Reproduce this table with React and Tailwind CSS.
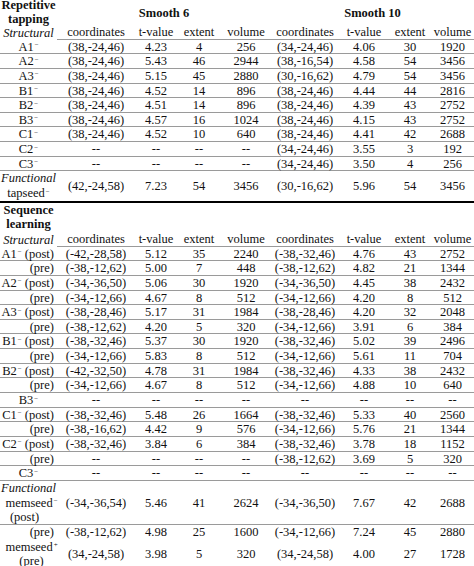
import React from "react";

const grid = "grid grid-cols-[57px_78px_42px_44px_50px_68px_50px_42px_43px]";
const heights = { 1: "h-[14.65px]", 2: "h-[29.3px]", 3: "h-[44px]" };

const tapping = [
  ["A1", ["(38,-24,46)", "4.23", "4", "256", "(34,-24,46)", "4.06", "30", "1920"]],
  ["A2", ["(38,-24,46)", "5.43", "46", "2944", "(38,-16,54)", "4.58", "54", "3456"]],
  ["A3", ["(38,-24,46)", "5.15", "45", "2880", "(30,-16,62)", "4.79", "54", "3456"]],
  ["B1", ["(38,-24,46)", "4.52", "14", "896", "(38,-24,46)", "4.44", "44", "2816"]],
  ["B2", ["(38,-24,46)", "4.51", "14", "896", "(38,-24,46)", "4.39", "43", "2752"]],
  ["B3", ["(38,-24,46)", "4.57", "16", "1024", "(38,-24,46)", "4.15", "43", "2752"]],
  ["C1", ["(38,-24,46)", "4.52", "10", "640", "(38,-24,46)", "4.41", "42", "2688"]],
  ["C2", ["--", "--", "--", "--", "(34,-24,46)", "3.55", "3", "192"]],
  ["C3", ["--", "--", "--", "--", "(34,-24,46)", "3.50", "4", "256"]],
];

const dash = ["--", "--", "--", "--", "--", "--", "--", "--"];

// [name, phase, values]  name null = "(pre)" row
const sequence = [
  ["A1", "post", ["(-42,-28,58)", "5.12", "35", "2240", "(-38,-32,46)", "4.76", "43", "2752"]],
  [null, "pre", ["(-38,-12,62)", "5.00", "7", "448", "(-38,-12,62)", "4.82", "21", "1344"]],
  ["A2", "post", ["(-34,-36,50)", "5.06", "30", "1920", "(-34,-36,50)", "4.45", "38", "2432"]],
  [null, "pre", ["(-34,-12,66)", "4.67", "8", "512", "(-34,-12,66)", "4.20", "8", "512"]],
  ["A3", "post", ["(-38,-28,46)", "5.17", "31", "1984", "(-38,-28,46)", "4.20", "32", "2048"]],
  [null, "pre", ["(-38,-12,62)", "4.20", "5", "320", "(-34,-12,66)", "3.91", "6", "384"]],
  ["B1", "post", ["(-38,-32,46)", "5.37", "30", "1920", "(-38,-32,46)", "5.02", "39", "2496"]],
  [null, "pre", ["(-34,-12,66)", "5.83", "8", "512", "(-34,-12,66)", "5.61", "11", "704"]],
  ["B2", "post", ["(-42,-32,50)", "4.78", "31", "1984", "(-38,-32,46)", "4.33", "38", "2432"]],
  [null, "pre", ["(-34,-12,66)", "4.67", "8", "512", "(-34,-12,66)", "4.88", "10", "640"]],
  ["B3", "", dash],
  ["C1", "post", ["(-38,-32,46)", "5.48", "26", "1664", "(-38,-32,46)", "5.33", "40", "2560"]],
  [null, "pre", ["(-38,-16,62)", "4.42", "9", "576", "(-34,-12,66)", "5.76", "21", "1344"]],
  ["C2", "post", ["(-38,-32,46)", "3.84", "6", "384", "(-38,-32,46)", "3.78", "18", "1152"]],
  [null, "pre", ["--", "--", "--", "--", "(-38,-12,62)", "3.69", "5", "320"]],
  ["C3", "", dash],
];

function Sup({ children }) {
  return <sup className="text-[7px] ml-[1px]">{children}</sup>;
}

function Row({ label, labelClass = "justify-center", values, tall = 1, line = true }) {
  return (
    <div className={`${grid} ${heights[tall]} ${line ? "border-b border-[#9a9a9a]" : ""}`}>
      <div className={`flex items-center whitespace-nowrap ${labelClass}`}>{label}</div>
      {values.map((v, i) => (
        <div key={i} className="flex items-center justify-center whitespace-nowrap">
          {v}
        </div>
      ))}
    </div>
  );
}

function ColumnHeads() {
  const heads = ["coordinates", "t-value", "extent", "volume", "coordinates", "t-value", "extent", "volume"];
  return (
    <div className={`${grid} h-[14.65px]`}>
      <div className="flex items-center justify-center italic">Structural</div>
      {heads.map((h, i) => (
        <div key={i} className="flex items-center justify-center border-b border-[#9a9a9a]">
          {h}
        </div>
      ))}
    </div>
  );
}

export default function App() {
  return (
    <div className="w-[474px] h-[566px] overflow-hidden bg-white text-[#111] text-[12.5px] leading-[14px] font-['Liberation_Serif','Times_New_Roman',serif]">
      {/* Repetitive tapping */}
      <div className={`${grid} h-[25px]`}>
        <div className="flex items-center justify-center text-center font-bold leading-[13.5px] -mt-[1px]">
          Repetitive
          <br />
          tapping
        </div>
        <div className="col-span-4 flex items-center justify-center font-bold">Smooth 6</div>
        <div className="col-span-4 flex items-center justify-center font-bold">Smooth 10</div>
      </div>
      <ColumnHeads />
      {tapping.map(([name, v]) => (
        <Row
          key={name}
          label={
            <span>
              {name}
              <Sup>−</Sup>
            </span>
          }
          values={v}
        />
      ))}
      <Row
        tall={2}
        line={false}
        label={
          <span className="text-center leading-[14.65px]">
            <span className="italic">Functional</span>
            <br />
            tapseed<Sup>−</Sup>
          </span>
        }
        values={["(42,-24,58)", "7.23", "54", "3456", "(30,-16,62)", "5.96", "54", "3456"]}
      />
      <div className="h-[2.5px] bg-black" />

      {/* Sequence learning */}
      <div className={`${grid} h-[28.8px]`}>
        <div className="flex items-center justify-center text-center font-bold leading-[13.5px]">
          Sequence
          <br />
          learning
        </div>
      </div>
      <ColumnHeads />
      {sequence.map(([name, phase, v], i) => (
        <Row
          key={i}
          labelClass={phase ? "justify-end pr-[3px]" : "justify-center"}
          label={
            name ? (
              <span>
                {name}
                <Sup>−</Sup>
                {phase && ` (${phase})`}
              </span>
            ) : (
              <span>(pre)</span>
            )
          }
          values={v}
        />
      ))}
      <Row
        tall={3}
        label={
          <span className="text-center leading-[14.65px]">
            <span className="italic">Functional</span>
            <br />
            <span className="pl-[6px]">
              memseed<Sup>−</Sup>
            </span>
            <br />
            <span className="pr-[8px]">(post)</span>
          </span>
        }
        values={["(-34,-36,54)", "5.46", "41", "2624", "(-34,-36,50)", "7.67", "42", "2688"]}
      />
      <Row
        line={false}
        labelClass="justify-end pr-[3px]"
        label={<span>(pre)</span>}
        values={["(-38,-12,62)", "4.98", "25", "1600", "(-34,-12,66)", "7.24", "45", "2880"]}
      />
      <Row
        tall={2}
        line={false}
        label={
          <span className="text-center leading-[14.65px] pl-[6px]">
            memseed<Sup>+</Sup>
            <br />
            (pre)
          </span>
        }
        values={["(34,-24,58)", "3.98", "5", "320", "(34,-24,58)", "4.00", "27", "1728"]}
      />
    </div>
  );
}
